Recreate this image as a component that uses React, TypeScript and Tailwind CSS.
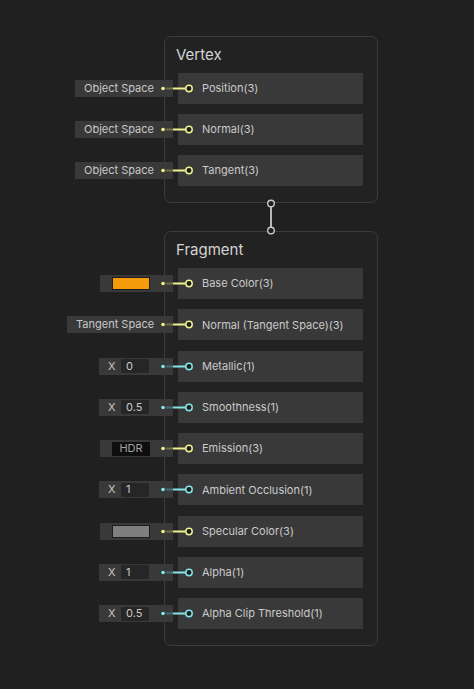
import type { ReactNode } from "react";

const FLOAT = "#84e4e7";
const VEC3 = "#eef08f";

type Port = {
  label: string;
  color: string;
  widget: ReactNode;
};

function TextWidget({ text, width }: { text: string; width: string }) {
  return (
    <div className={`flex h-[17px] items-center bg-[#393939] pl-[9px] ${width}`}>
      <span className="text-[11px] leading-none text-[#c8c8c8]">{text}</span>
    </div>
  );
}

function FloatWidget({ value }: { value: string }) {
  return (
    <div className="flex h-[17px] w-[74px] items-center bg-[#393939] pl-[9px]">
      <span className="w-[13px] text-[11px] leading-none text-[#c8c8c8]">X</span>
      <div className="flex h-[14px] w-[28px] items-center rounded-[2px] bg-[#262626] pl-[5px] text-[11px] leading-none text-[#cacaca]">
        {value}
      </div>
    </div>
  );
}

function ColorWidget({ swatch }: { swatch: string }) {
  return (
    <div className="flex h-[17px] w-[73px] items-center bg-[#393939] pl-[12px]">
      <div className={`h-[13px] w-[38px] border border-[#1c1c1c] ${swatch}`} />
    </div>
  );
}

function HdrWidget() {
  return (
    <div className="flex h-[17px] w-[73px] items-center bg-[#393939] pl-[12px]">
      <div className="flex h-[14px] w-[38px] items-center justify-center bg-[#0e0e0e] text-[11px] leading-none text-[#a2a2a2]">
        HDR
      </div>
    </div>
  );
}

function Wire({ color }: { color: string }) {
  return (
    <svg
      className="absolute left-[-18px] top-[9px]"
      width="36"
      height="13"
      viewBox="0 0 36 13"
    >
      <line x1="5" y1="6.5" x2="13" y2="6.5" stroke={color} strokeOpacity="0.3" strokeWidth="2" />
      <line x1="13" y1="6.5" x2="26" y2="6.5" stroke={color} strokeWidth="2" />
      <circle cx="3" cy="6.5" r="2.3" fill={color} stroke="#1e1e1e" strokeWidth="0.8" />
      <circle cx="29" cy="6.5" r="3.2" fill="#1e1e1e" stroke={color} strokeWidth="1.5" />
    </svg>
  );
}

function Row({ port }: { port: Port }) {
  return (
    <div className="relative flex h-[31px] items-center bg-[#393939] pl-[24px]">
      <div className="absolute right-full top-[7px] mr-[5px]">{port.widget}</div>
      <Wire color={port.color} />
      <span className="text-[11px] text-[#cacaca]">{port.label}</span>
    </div>
  );
}

function Node({ title, ports, gap }: { title: string; ports: Port[]; gap: string }) {
  return (
    <div className="w-[214px] rounded-[7px] border border-[#3c3c3c] bg-[#222222] pb-[16px] pl-[13px] pr-[14px] pt-[8px]">
      <div className="-ml-[2px] mb-[8px] h-[20px] text-[15px] leading-[20px] text-[#d4d4d4]">
        {title}
      </div>
      <div className={`flex flex-col ${gap}`}>
        {ports.map((p) => (
          <Row key={p.label} port={p} />
        ))}
      </div>
    </div>
  );
}

const vertexPorts: Port[] = [
  { label: "Position(3)", color: VEC3, widget: <TextWidget text="Object Space" width="w-[98px]" /> },
  { label: "Normal(3)", color: VEC3, widget: <TextWidget text="Object Space" width="w-[98px]" /> },
  { label: "Tangent(3)", color: VEC3, widget: <TextWidget text="Object Space" width="w-[98px]" /> },
];

const fragmentPorts: Port[] = [
  { label: "Base Color(3)", color: VEC3, widget: <ColorWidget swatch="bg-[#f49b0b]" /> },
  { label: "Normal (Tangent Space)(3)", color: VEC3, widget: <TextWidget text="Tangent Space" width="w-[106px]" /> },
  { label: "Metallic(1)", color: FLOAT, widget: <FloatWidget value="0" /> },
  { label: "Smoothness(1)", color: FLOAT, widget: <FloatWidget value="0.5" /> },
  { label: "Emission(3)", color: VEC3, widget: <HdrWidget /> },
  { label: "Ambient Occlusion(1)", color: FLOAT, widget: <FloatWidget value="1" /> },
  { label: "Specular Color(3)", color: VEC3, widget: <ColorWidget swatch="bg-[#7f7f7f]" /> },
  { label: "Alpha(1)", color: FLOAT, widget: <FloatWidget value="1" /> },
  { label: "Alpha Clip Threshold(1)", color: FLOAT, widget: <FloatWidget value="0.5" /> },
];

export default function App() {
  return (
    <div
      className="min-h-screen w-full bg-[#202020] pl-[164px] pt-[36px]"
      style={{ fontFamily: "Inter, 'Noto Sans', sans-serif" }}
    >
      <Node title="Vertex" ports={vertexPorts} gap="gap-[10px]" />
      <div className="relative z-10 h-[28px] w-[214px]">
        <svg className="absolute left-[102px] top-[-5px]" width="10" height="38" viewBox="0 0 10 38">
          <line x1="5" y1="9" x2="5" y2="29" stroke="#b8b8b8" strokeWidth="2" />
          <circle cx="5" cy="5.5" r="3.3" fill="#222222" stroke="#c8c8c8" strokeWidth="1.4" />
          <circle cx="5" cy="32.5" r="3.3" fill="#222222" stroke="#c8c8c8" strokeWidth="1.4" />
        </svg>
      </div>
      <Node title="Fragment" ports={fragmentPorts} gap="gap-[10.25px]" />
    </div>
  );
}
